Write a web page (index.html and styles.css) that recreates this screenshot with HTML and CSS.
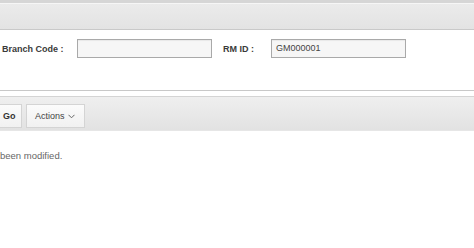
FILE: index.html
```html
<!DOCTYPE html>
<html>
<head>
<meta charset="utf-8">
<link rel="stylesheet" href="styles.css">
</head>
<body>
<div class="topband"></div>
<div class="header"></div>
<div class="form">
  <div class="row">
    <span class="lbl lbl-branch">Branch Code :</span>
    <span class="field field-branch"></span>
    <span class="lbl lbl-rm">RM ID :</span>
    <span class="field field-rm">GM000001</span>
  </div>
</div>
<div class="sep"></div>
<div class="toolbar">
  <span class="btn btn-go">Go</span>
  <span class="btn btn-actions">Actions
    <svg class="chev" width="7" height="5" viewBox="0 0 7 5"><polyline points="0.5,0.8 3.5,3.8 6.5,0.8" fill="none" stroke="#666" stroke-width="1"/></svg>
  </span>
</div>
<div class="msg">been modified.</div>
</body>
</html>
```
FILE: styles.css
```css
html, body {
  margin: 0;
  padding: 0;
  background: #ffffff;
  font-family: "Liberation Sans", Arial, sans-serif;
  color: #333;
}
.topband {
  height: 3px;
  background: #d6d6d6;
  border-bottom: 1px solid #f6f6f6;
}
.header {
  height: 25px;
  background: linear-gradient(#ebebeb, #e3e3e3);
  border-bottom: 1px solid #c9c9c9;
}
.form {
  height: 60px;
  box-sizing: border-box;
  padding-top: 9px;
}
.row {
  display: flex;
  align-items: center;
  height: 19px;
}
.lbl {
  font-size: 9px;
  font-weight: bold;
  color: #3a3a3a;
}
.lbl-branch {
  margin-left: 2px;
  width: 75px;
}
.lbl-rm {
  margin-left: 11px;
  width: 48px;
}
.field {
  box-sizing: border-box;
  height: 19px;
  border: 1px solid #a9a9a9;
  background: #f6f6f6;
  font-size: 9px;
  color: #444;
  line-height: 17px;
  padding-left: 4px;
  box-shadow: inset 0 1px 1px rgba(0,0,0,0.06);
}
.field-branch { width: 135px; }
.field-rm { width: 135px; }
.sep {
  height: 5px;
  border-top: 1px solid #c8c8c8;
  border-bottom: 1px solid #d4d4d4;
}
.toolbar {
  height: 34px;
  box-sizing: border-box;
  background: linear-gradient(#efefef, #e2e2e2);
  border-bottom: 1px solid #e6e6e6;
  display: flex;
  align-items: flex-start;
  padding-top: 7px;
  margin-left: -6px;
  gap: 4px;
}
.btn {
  box-sizing: border-box;
  height: 24px;
  border: 1px solid #d4d4d4;
  background: linear-gradient(#fbfbfb, #f1f1f1);
  font-size: 9px;
  color: #333;
  display: flex;
  align-items: center;
}
.btn-go {
  width: 28px;
  padding-left: 8px;
  font-weight: bold;
}
.btn-actions {
  width: 59px;
  padding-left: 8px;
  color: #444;
}
.chev {
  margin-left: 3px;
  margin-top: 1px;
}
.msg {
  margin-top: 19px;
  font-size: 9.5px;
  color: #666;
  padding-left: 0;
}
```
